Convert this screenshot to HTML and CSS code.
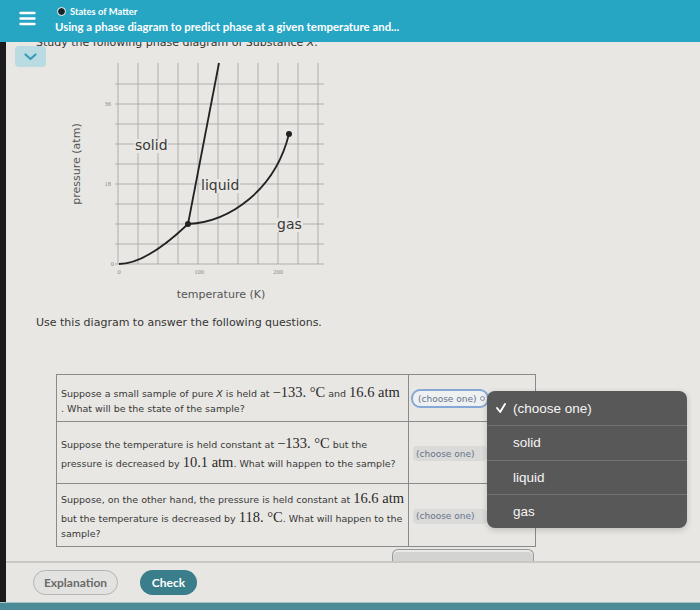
FILE: index.html
```html
<!DOCTYPE html>
<html>
<head>
<meta charset="utf-8">
<title>States of Matter</title>
<link rel="stylesheet" href="styles.css">
</head>
<body>
<div class="app">
  <header class="topbar">
    <button class="menu-btn" aria-label="Menu">
      <svg width="17" height="15" viewBox="0 0 17 15"><path d="M1.5 2h14M1.5 7.5h14M1.5 13h14" stroke="#fff" stroke-width="2.4" stroke-linecap="round"/></svg>
    </button>
    <div class="titles">
      <div class="topic"><span class="radio"></span>States of Matter</div>
      <div class="lesson">Using a phase diagram to predict phase at a given temperature and...</div>
    </div>
  </header>

  <div class="screen">
    <main class="content">
      <div class="collapse">
        <svg width="13" height="8" viewBox="0 0 13 8"><path d="M1.5 1.5l5 4.5 5-4.5" fill="none" stroke="#3c9bb4" stroke-width="2.2" stroke-linecap="round" stroke-linejoin="round"/></svg>
      </div>

      <p class="intro">Study the following phase diagram of Substance <i>X</i>.</p>

      <svg class="diagram" width="290" height="256" viewBox="0 0 290 256">
        <path class="grid" d="M68 13V214M88 13V214M108 13V214M128 13V214M148 13V214M168 13V214M188 13V214M208 13V214M228 13V214M248 13V214M268 13V214M65 34H274M65 54H274M65 74H274M65 94H274M65 114H274M65 134H274M65 154H274M65 174H274M65 194H274M65 214H274"/>
        <g class="ticks">
          <text x="61" y="56" text-anchor="end">36</text>
          <text x="61" y="136" text-anchor="end">18</text>
          <text x="64" y="216" text-anchor="end">0</text>
          <text x="69" y="224" text-anchor="middle">0</text>
          <text x="149" y="224" text-anchor="middle">100</text>
          <text x="228" y="224" text-anchor="middle">200</text>
        </g>
        <g class="curves">
          <path d="M69 214Q96 214 138 174"/>
          <path d="M138 174L169 13"/>
          <path d="M138 174C180 172 225 140 239 84"/>
        </g>
        <circle cx="138" cy="174" r="3" class="dot"/>
        <circle cx="239" cy="84" r="3" class="dot"/>
        <rect x="84" y="89" width="34" height="14" class="lbl-bg"/>
        <text x="85" y="100" class="region">solid</text>
        <rect x="151" y="129" width="39" height="14" class="lbl-bg"/>
        <text x="151" y="140" class="region">liquid</text>
        <rect x="226" y="168" width="27" height="14" class="lbl-bg"/>
        <text x="227" y="179" class="region">gas</text>
        <text x="30" y="114" class="axis" text-anchor="middle" transform="rotate(-90 30 114)">pressure (atm)</text>
        <text x="171" y="248" class="axis" text-anchor="middle">temperature (K)</text>
      </svg>

      <p class="prompt">Use this diagram to answer the following questions.</p>

      <div class="qa">
        <table class="qtable">
          <colgroup><col class="c1"><col class="c2"></colgroup>
          <tr class="r1">
            <td class="q">Suppose a small sample of pure <i>X</i> is held at <span class="m">−133. °C</span> and <span class="m">16.6 atm</span><br>. What will be the state of the sample?</td>
            <td class="a"><span class="select focused">(choose one)<span class="knob"></span></span></td>
          </tr>
          <tr class="r2">
            <td class="q">Suppose the temperature is held constant at <span class="m">−133. °C</span> but the<br>pressure is decreased by <span class="m">10.1 atm</span>. What will happen to the sample?</td>
            <td class="a"><span class="select plain">(choose one)</span></td>
          </tr>
          <tr class="r3">
            <td class="q">Suppose, on the other hand, the pressure is held constant at <span class="m">16.6 atm</span><br>but the temperature is decreased by <span class="m">118. °C</span>. What will happen to the<br>sample?</td>
            <td class="a"><span class="select plain">(choose one)</span></td>
          </tr>
        </table>

        <ul class="menu">
          <li class="opt selected"><span class="tick"><svg width="10" height="10" viewBox="0 0 10 10"><path d="M1 5l3.2 4L9 1" fill="none" stroke="#fff" stroke-width="1.9" stroke-linecap="round" stroke-linejoin="round"/></svg></span>(choose one)</li>
          <li class="opt"><span class="tick"></span>solid</li>
          <li class="opt"><span class="tick"></span>liquid</li>
          <li class="opt"><span class="tick"></span>gas</li>
        </ul>

        <div class="peek"></div>
      </div>
    </main>

    <footer class="actions">
      <button class="btn btn-outline">Explanation</button>
      <button class="btn btn-primary">Check</button>
    </footer>
  </div>

  <div class="bottombar"></div>
</div>
</body>
</html>
```

FILE: styles.css
```css
* { box-sizing: border-box; }
html, body { margin: 0; padding: 0; }
body {
  width: 700px;
  height: 610px;
  overflow: hidden;
  background: #e8e7e3;
  font-family: "DejaVu Sans", Verdana, sans-serif;
  color: #353535;
}
.app { display: flex; flex-direction: column; height: 610px; }

/* top bar */
.topbar {
  height: 42px;
  flex: none;
  display: flex;
  align-items: flex-start;
  background: #27a6c3;
  color: #fff;
  font-family: Lato, "Open Sans", sans-serif;
  font-weight: 700;
  position: relative;
  z-index: 3;
}
.menu-btn {
  width: 55px;
  height: 42px;
  padding: 11px 0 0 19px;
  margin: 0;
  border: 0;
  background: transparent;
  flex: none;
  display: flex;
  align-items: flex-start;
  justify-content: flex-start;
}
.menu-btn svg { display: block; }
.titles { padding-top: 5px; }
.topic {
  display: flex;
  align-items: center;
  gap: 4px;
  padding-left: 2px;
  font-size: 9.4px;
  line-height: 13px;
}
.radio {
  width: 9px;
  height: 9px;
  border-radius: 50%;
  background: #16242b;
  border: 1.5px solid #fff;
}
.lesson { font-size: 11.4px; line-height: 15px; margin-top: 1px; }

/* screen */
.screen {
  flex: 1;
  min-height: 0;
  display: flex;
  flex-direction: column;
  border-left: 6px solid #1b1b1b;
}
.content {
  flex: 1;
  min-height: 0;
  position: relative;
  overflow: hidden;
  padding-left: 30px;
}
.collapse {
  position: absolute;
  left: 9px;
  top: 4px;
  width: 31px;
  height: 21px;
  border-radius: 4px;
  background: #b9dce3;
  display: flex;
  align-items: center;
  justify-content: center;
  z-index: 2;
}
.collapse svg { display: block; }

.intro {
  margin: -6px 0 0;
  padding-bottom: 1px;
  font-size: 11px;
  line-height: 13px;
  color: #333;
}
.diagram { display: block; margin-left: 14px; }
.grid { stroke: #a8a8a8; stroke-width: 0.9; fill: none; }
.ticks text { font-family: "Liberation Serif", serif; font-size: 6.5px; fill: #8c8c8c; }
.curves path { fill: none; stroke: #222; stroke-width: 1.8; }
.dot { fill: #222; }
.lbl-bg { fill: #e8e7e3; }
.region { font-family: "DejaVu Sans", sans-serif; font-size: 14px; fill: #3a3a3a; }
.axis { font-family: "DejaVu Sans", sans-serif; font-size: 11px; fill: #555; }

.prompt {
  margin: 10px 0 0;
  font-size: 11px;
  line-height: 13px;
  color: #353535;
}

/* question table */
.qa { position: relative; margin: 45px 0 0 20px; width: 479px; }
.qtable {
  border-collapse: collapse;
  table-layout: fixed;
  width: 479px;
}
.qtable .c1 { width: 352px; }
.qtable .c2 { width: 127px; }
.qtable td {
  border: 1px solid #8a8a8a;
  vertical-align: middle;
  padding: 0;
}
.r1 { height: 47px; }
.r2 { height: 62px; }
.r3 { height: 63px; }
.q {
  padding: 0 4px !important;
  font-size: 9.5px;
  line-height: 14.5px;
  color: #383838;
  white-space: nowrap;
}
.r1 .q { padding-top: 4px !important; }
.m {
  font-family: "Liberation Serif", "Times New Roman", serif;
  font-size: 14.5px;
  line-height: 19px;
  color: #2a2a2a;
}
.a { padding-left: 2px !important; }
.select {
  display: inline-flex;
  align-items: center;
  font-size: 9px;
  color: #66738c;
  white-space: nowrap;
  vertical-align: middle;
}
.select.focused {
  width: 78px;
  height: 19px;
  padding: 0 0 0 5px;
  border: 2px solid #86a8d6;
  border-radius: 9px;
  background: #eef0f2;
}
.knob {
  width: 5px;
  height: 5px;
  margin-left: 3px;
  border: 1px solid #8a93a3;
  border-radius: 50%;
}
.select.plain {
  width: 74px;
  height: 15px;
  margin-left: 2px;
  padding-left: 3px;
  border-radius: 4px;
  background: #dadad8;
}

/* popup menu */
.menu {
  position: absolute;
  left: 431px;
  top: 17px;
  width: 200px;
  margin: 0;
  padding: 0;
  list-style: none;
  background: #585858;
  border-radius: 8px;
  box-shadow: 0 2px 6px rgba(0,0,0,0.18);
  font-family: "Liberation Sans", Arial, sans-serif;
  font-size: 13.5px;
  color: #f5f5f5;
  overflow: hidden;
}
.opt {
  height: 34.3px;
  display: flex;
  align-items: center;
  padding-left: 9px;
}
.opt + .opt { border-top: 1px solid #737373; }
.tick { width: 17px; flex: none; display: flex; align-items: center; }
.tick svg { display: block; }

.peek {
  margin: 2px 0 0 336px;
  width: 142px;
  height: 14px;
  border: 1px solid #9a9a98;
  border-bottom: 0;
  border-radius: 6px 6px 0 0;
  background: #d3d3d1;
  box-shadow: inset 0 2px 0 #e9e9e7;
}

/* footer */
.actions {
  flex: none;
  height: 41px;
  border-top: 2px solid #c9c8c4;
  background: #e7e6e2;
  display: flex;
  align-items: center;
  gap: 22px;
  padding-left: 27px;
}
.btn {
  height: 25px;
  margin: 0;
  border-radius: 13px;
  font-family: Lato, "Open Sans", sans-serif;
  font-weight: 700;
  font-size: 12px;
  padding: 0;
}
.btn-outline {
  width: 85px;
  border: 1px solid #b4b4b2;
  background: #e2e2e0;
  color: #6a6a6a;
}
.btn-primary {
  width: 57px;
  border: 0;
  background: #3a7d8b;
  color: #fff;
}
.bottombar {
  height: 8px;
  flex: none;
  background: #4c8b95;
  border-top: 1px solid #a3c5c9;
}
```
